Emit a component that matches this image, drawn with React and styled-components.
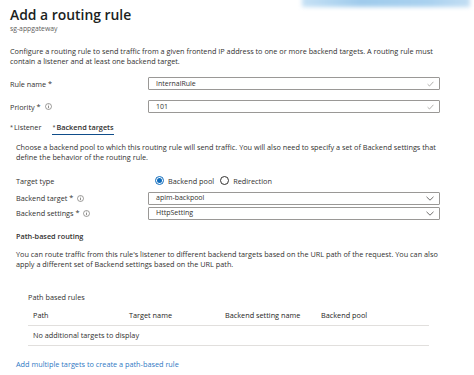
import React from "react";
import styled, { createGlobalStyle } from "styled-components";

const Global = createGlobalStyle`
  html, body { margin: 0; padding: 0; background: #fff; }
  body { font-family: "Open Sans", "Noto Sans", sans-serif; color: #323130; }
  * { box-sizing: border-box; }
`;

const Page = styled.div`
  position: relative;
  width: 474px;
  height: 375px;
  overflow: hidden;
  padding: 4px 0 0 10px;
  font-size: 7.3px;
  line-height: 10px;
`;

const Glow = styled.div`
  position: absolute;
  top: -5px;
  left: 302px;
  width: 168px;
  height: 12px;
  background: linear-gradient(90deg, #c6e1f5 0%, #9fcbec 35%, #a9d1ef 75%, #c3def3 100%);
  filter: blur(2px);
`;

const Title = styled.h1`
  margin: 0;
  font-size: 13.9px;
  line-height: 21px;
  font-weight: 600;
  color: #201f1e;
`;

const Subtitle = styled.div`
  font-size: 6.8px;
  line-height: 7px;
  color: #605e5c;
`;

const Para = styled.p`
  margin: ${(p) => p.$m || "0"};
  width: ${(p) => p.$w || "440px"};
`;

const FormRow = styled.div`
  display: grid;
  grid-template-columns: ${(p) => p.$label || "138px"} 292px;
  align-items: center;
  height: 13px;
  margin-top: ${(p) => p.$mt || "0"};
`;

const Label = styled.div`
  display: flex;
  align-items: center;
  gap: 4px;
`;

const Field = styled.div`
  display: flex;
  align-items: center;
  justify-content: space-between;
  height: 13px;
  border: 1px solid #9a9896;
  border-radius: 1px;
  padding: 0 5px 0 7px;
  font-size: 7px;
  color: #323130;
`;

const Tabs = styled.div`
  display: flex;
  gap: 11px;
  margin-top: 7px;
`;

const Tab = styled.div`
  font-weight: ${(p) => (p.$active ? 600 : 400)};
  color: #323130;
  border-bottom: 1.5px solid ${(p) => (p.$active ? "#0f4d8a" : "transparent")};
  line-height: 14px;
`;

const Star = styled.span`
  font-weight: 400;
  margin-right: 1px;
  vertical-align: 1px;
  font-size: 5.5px;
`;

const Panel = styled.div`
  padding-left: 6px;
`;

const Radios = styled.div`
  display: flex;
  align-items: center;
  gap: 6px;
  padding-left: 7px;
`;

const Radio = styled.label`
  display: flex;
  align-items: center;
  gap: 4px;
`;

const Circle = styled.span`
  width: 9px;
  height: 9px;
  border-radius: 50%;
  border: 1px solid ${(p) => (p.$on ? "#0f6cbd" : "#323130")};
  display: flex;
  align-items: center;
  justify-content: center;
  &::after {
    content: "";
    width: 5px;
    height: 5px;
    border-radius: 50%;
    background: ${(p) => (p.$on ? "#0f6cbd" : "transparent")};
  }
`;

const SectionTitle = styled.div`
  font-weight: 600;
  margin-top: 11px;
`;

const RulesBox = styled.div`
  margin: 23px 0 0 12px;
  width: 401px;
`;

const RulesLabel = styled.div`
  margin-bottom: 4px;
`;

const TableRow = styled.div`
  display: grid;
  grid-template-columns: 96px 96px 96px 1fr;
  height: 20px;
  align-items: center;
  padding-left: 5px;
  border-bottom: 1px solid #e1dfdd;
  font-weight: ${(p) => (p.$head ? 500 : 400)};
  color: ${(p) => (p.$head ? "#252423" : "#323130")};
`;

const Cell = styled.span`
  grid-column: ${(p) => (p.$full ? "1 / -1" : "auto")};
`;

const Link = styled.a`
  display: block;
  color: #3079c4;
  margin-top: 13px;
  text-decoration: none;
`;

const Info = () => (
  <svg width="7" height="7" viewBox="0 0 7 7">
    <circle cx="3.5" cy="3.5" r="3" fill="none" stroke="#605e5c" strokeWidth="0.6" />
    <line x1="3.5" y1="3" x2="3.5" y2="5.2" stroke="#605e5c" strokeWidth="0.7" />
    <circle cx="3.5" cy="2" r="0.45" fill="#605e5c" />
  </svg>
);

const Check = () => (
  <svg width="7" height="6" viewBox="0 0 7 6">
    <path d="M0.6 3.2 L2.5 5 L6.4 0.8" fill="none" stroke="#a8a6a4" strokeWidth="0.9" />
  </svg>
);

const Chevron = () => (
  <svg width="8" height="5" viewBox="0 0 8 5">
    <path d="M0.5 0.8 L4 4.2 L7.5 0.8" fill="none" stroke="#605e5c" strokeWidth="0.9" />
  </svg>
);

export default function App() {
  return (
    <>
      <Global />
      <Page>
        <Glow />
        <Title>Add a routing rule</Title>
        <Subtitle>sg-appgateway</Subtitle>
        <Para $m="14px 0 0 0">
          Configure a routing rule to send traffic from a given frontend IP address to one or more backend targets. A routing rule must contain a listener and at least one backend target.
        </Para>
        <FormRow $mt="11px">
          <Label>Rule name *</Label>
          <Field>InternalRule<Check /></Field>
        </FormRow>
        <FormRow $mt="10px">
          <Label>Priority * <Info /></Label>
          <Field>101<Check /></Field>
        </FormRow>
        <Tabs>
          <Tab><Star>*</Star>Listener</Tab>
          <Tab $active><Star>*</Star>Backend targets</Tab>
        </Tabs>
        <Panel>
          <Para $m="7px 0 0 0" $w="430px">
            Choose a backend pool to which this routing rule will send traffic. You will also need to specify a set of Backend settings that define the behavior of the routing rule.
          </Para>
          <FormRow $label="132px" $mt="12px">
            <Label>Target type</Label>
            <Radios>
              <Radio><Circle $on />Backend pool</Radio>
              <Radio><Circle />Redirection</Radio>
            </Radios>
          </FormRow>
          <FormRow $label="132px" $mt="4.5px">
            <Label>Backend target * <Info /></Label>
            <Field>apim-backpool<Chevron /></Field>
          </FormRow>
          <FormRow $label="132px" $mt="2px">
            <Label>Backend settings * <Info /></Label>
            <Field>HttpSetting<Chevron /></Field>
          </FormRow>
          <SectionTitle>Path-based routing</SectionTitle>
          <Para $m="8px 0 0 0" $w="440px">
            You can route traffic from this rule's listener to different backend targets based on the URL path of the request. You can also apply a different set of Backend settings based on the URL path.
          </Para>
          <RulesBox>
            <RulesLabel>Path based rules</RulesLabel>
            <TableRow $head>
              <Cell>Path</Cell>
              <Cell>Target name</Cell>
              <Cell>Backend setting name</Cell>
              <Cell>Backend pool</Cell>
            </TableRow>
            <TableRow>
              <Cell $full>No additional targets to display</Cell>
            </TableRow>
          </RulesBox>
          <Link href="#">Add multiple targets to create a path-based rule</Link>
        </Panel>
      </Page>
    </>
  );
}
